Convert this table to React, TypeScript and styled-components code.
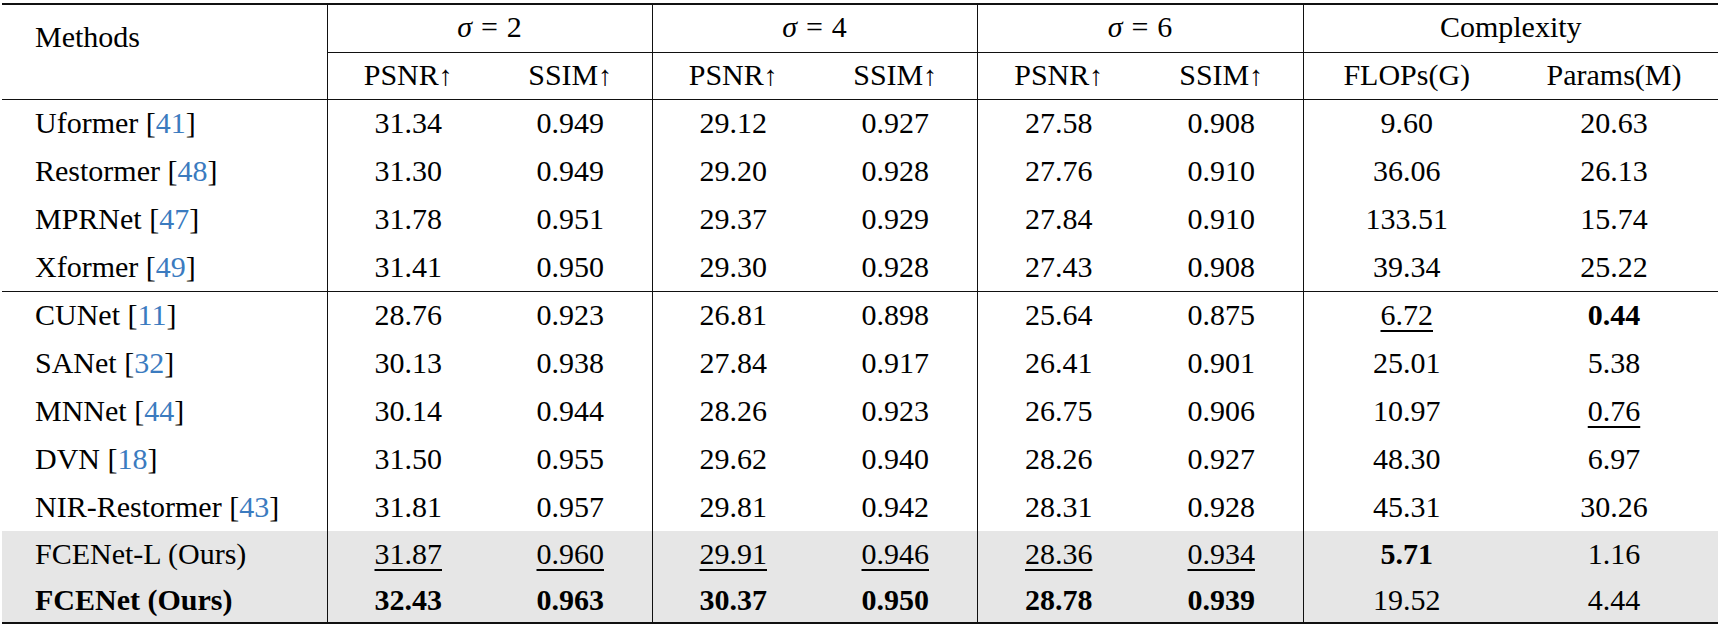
import React from "react";
import styled, { createGlobalStyle } from "styled-components";

const Global = createGlobalStyle`
  html, body { margin: 0; padding: 0; background: #ffffff; }
  body {
    font-family: "Liberation Serif", serif;
    color: #000000;
  }
`;

const Page = styled.div`
  width: 1721px;
  height: 630px;
  box-sizing: border-box;
  padding: 3px 3px 0 2px;
  overflow: hidden;
  font-family: "Liberation Serif", serif;
`;

const Table = styled.table`
  width: 1716px;
  table-layout: fixed;
  border-collapse: collapse;
  font-family: "Liberation Serif", serif;
  font-size: 30px;
  line-height: 1;
  color: #000;
  border-top: 2px solid #111;
  border-bottom: 2px solid #111;

  & th,
  & td {
    font-family: "Liberation Serif", serif;
    font-size: 30px;
  }
`;

const Col = styled.col<{ $w: number }>`
  width: ${(p) => p.$w}px;
`;

const HeadRowTop = styled.tr`
  height: 48px;
`;

const HeadRowSub = styled.tr`
  height: 47px;
  border-bottom: 1px solid #111;
`;

const MethodsHead = styled.th`
  font-weight: normal;
  text-align: left;
  vertical-align: top;
  padding: 17px 0 0 33px;
  border-right: 1px solid #111;
`;

const GroupHead = styled.th<{ $last?: boolean }>`
  font-weight: normal;
  text-align: center;
  vertical-align: middle;
  padding: 0 0 3px;
  border-bottom: 1px solid #111;
  border-right: ${(p) => (p.$last ? "none" : "1px solid #111")};
`;

const SubHead = styled.th<{ $divider?: boolean }>`
  font-weight: normal;
  text-align: center;
  vertical-align: middle;
  padding: 0 0 2px;
  border-right: ${(p) => (p.$divider ? "1px solid #111" : "none")};
`;

const Sigma = styled.span`
  font-style: italic;
`;

const Eq = styled.span`
  margin: 0 9px;
`;

const Arrow = styled.span`
  font-size: 28px;
`;

const BodyRow = styled.tr<{ $shade?: boolean; $sectionEnd?: boolean }>`
  height: ${(p) => (p.$shade ? 46 : 48)}px;
  background: ${(p) => (p.$shade ? "#e6e6e6" : "transparent")};
  border-bottom: ${(p) => (p.$sectionEnd ? "1px solid #111" : "none")};
`;

const NameCell = styled.td<{ $bold?: boolean }>`
  text-align: left;
  vertical-align: middle;
  padding: 0 0 0 33px;
  white-space: nowrap;
  font-weight: ${(p) => (p.$bold ? "bold" : "normal")};
  border-right: 1px solid #111;
`;

const ValueCell = styled.td<{ $divider?: boolean }>`
  text-align: center;
  vertical-align: middle;
  padding: 0;
  border-right: ${(p) => (p.$divider ? "1px solid #111" : "none")};
`;

const Value = styled.span<{ $bold?: boolean; $under?: boolean }>`
  font-weight: ${(p) => (p.$bold ? "bold" : "normal")};
  text-decoration: ${(p) => (p.$under ? "underline" : "none")};
  text-decoration-thickness: 1.5px;
  text-underline-offset: 5px;
`;

const Cite = styled.span`
  color: #3b7bbf;
`;

type Cell = { v: string; b?: boolean; u?: boolean };

type Row = {
  name: string;
  cite?: string;
  bold?: boolean;
  shade?: boolean;
  sectionEnd?: boolean;
  cells: Cell[];
};

const c = (v: string, flags = ""): Cell => ({
  v,
  b: flags.includes("b"),
  u: flags.includes("u"),
});

const rows: Row[] = [
  { name: "Uformer", cite: "41", cells: [c("31.34"), c("0.949"), c("29.12"), c("0.927"), c("27.58"), c("0.908"), c("9.60"), c("20.63")] },
  { name: "Restormer", cite: "48", cells: [c("31.30"), c("0.949"), c("29.20"), c("0.928"), c("27.76"), c("0.910"), c("36.06"), c("26.13")] },
  { name: "MPRNet", cite: "47", cells: [c("31.78"), c("0.951"), c("29.37"), c("0.929"), c("27.84"), c("0.910"), c("133.51"), c("15.74")] },
  { name: "Xformer", cite: "49", sectionEnd: true, cells: [c("31.41"), c("0.950"), c("29.30"), c("0.928"), c("27.43"), c("0.908"), c("39.34"), c("25.22")] },
  { name: "CUNet", cite: "11", cells: [c("28.76"), c("0.923"), c("26.81"), c("0.898"), c("25.64"), c("0.875"), c("6.72", "u"), c("0.44", "b")] },
  { name: "SANet", cite: "32", cells: [c("30.13"), c("0.938"), c("27.84"), c("0.917"), c("26.41"), c("0.901"), c("25.01"), c("5.38")] },
  { name: "MNNet", cite: "44", cells: [c("30.14"), c("0.944"), c("28.26"), c("0.923"), c("26.75"), c("0.906"), c("10.97"), c("0.76", "u")] },
  { name: "DVN", cite: "18", cells: [c("31.50"), c("0.955"), c("29.62"), c("0.940"), c("28.26"), c("0.927"), c("48.30"), c("6.97")] },
  { name: "NIR-Restormer", cite: "43", cells: [c("31.81"), c("0.957"), c("29.81"), c("0.942"), c("28.31"), c("0.928"), c("45.31"), c("30.26")] },
  { name: "FCENet-L (Ours)", shade: true, cells: [c("31.87", "u"), c("0.960", "u"), c("29.91", "u"), c("0.946", "u"), c("28.36", "u"), c("0.934", "u"), c("5.71", "b"), c("1.16")] },
  { name: "FCENet (Ours)", shade: true, bold: true, cells: [c("32.43", "b"), c("0.963", "b"), c("30.37", "b"), c("0.950", "b"), c("28.78", "b"), c("0.939", "b"), c("19.52"), c("4.44")] },
];

const widths = [325, 162, 163, 162, 163, 163, 163, 207, 208];
const sigmas = ["2", "4", "6"];

export default function App() {
  return (
    <>
      <Global />
      <Page>
        <Table>
          <colgroup>
            {widths.map((w, i) => (
              <Col key={i} $w={w} />
            ))}
          </colgroup>
          <thead>
            <HeadRowTop>
              <MethodsHead rowSpan={2}>Methods</MethodsHead>
              {sigmas.map((s) => (
                <GroupHead key={s} colSpan={2}>
                  <Sigma>σ</Sigma>
                  <Eq>=</Eq>
                  {s}
                </GroupHead>
              ))}
              <GroupHead colSpan={2} $last>
                Complexity
              </GroupHead>
            </HeadRowTop>
            <HeadRowSub>
              {sigmas.map((s) => (
                <React.Fragment key={s}>
                  <SubHead>
                    PSNR<Arrow>↑</Arrow>
                  </SubHead>
                  <SubHead $divider>
                    SSIM<Arrow>↑</Arrow>
                  </SubHead>
                </React.Fragment>
              ))}
              <SubHead>FLOPs(G)</SubHead>
              <SubHead>Params(M)</SubHead>
            </HeadRowSub>
          </thead>
          <tbody>
            {rows.map((r) => (
              <BodyRow key={r.name} $shade={r.shade} $sectionEnd={r.sectionEnd}>
                <NameCell $bold={r.bold}>
                  {r.name}
                  {r.cite && (
                    <>
                      {" "}[<Cite>{r.cite}</Cite>]
                    </>
                  )}
                </NameCell>
                {r.cells.map((cell, i) => (
                  <ValueCell key={i} $divider={i === 1 || i === 3 || i === 5}>
                    <Value $bold={cell.b} $under={cell.u}>
                      {cell.v}
                    </Value>
                  </ValueCell>
                ))}
              </BodyRow>
            ))}
          </tbody>
        </Table>
      </Page>
    </>
  );
}
